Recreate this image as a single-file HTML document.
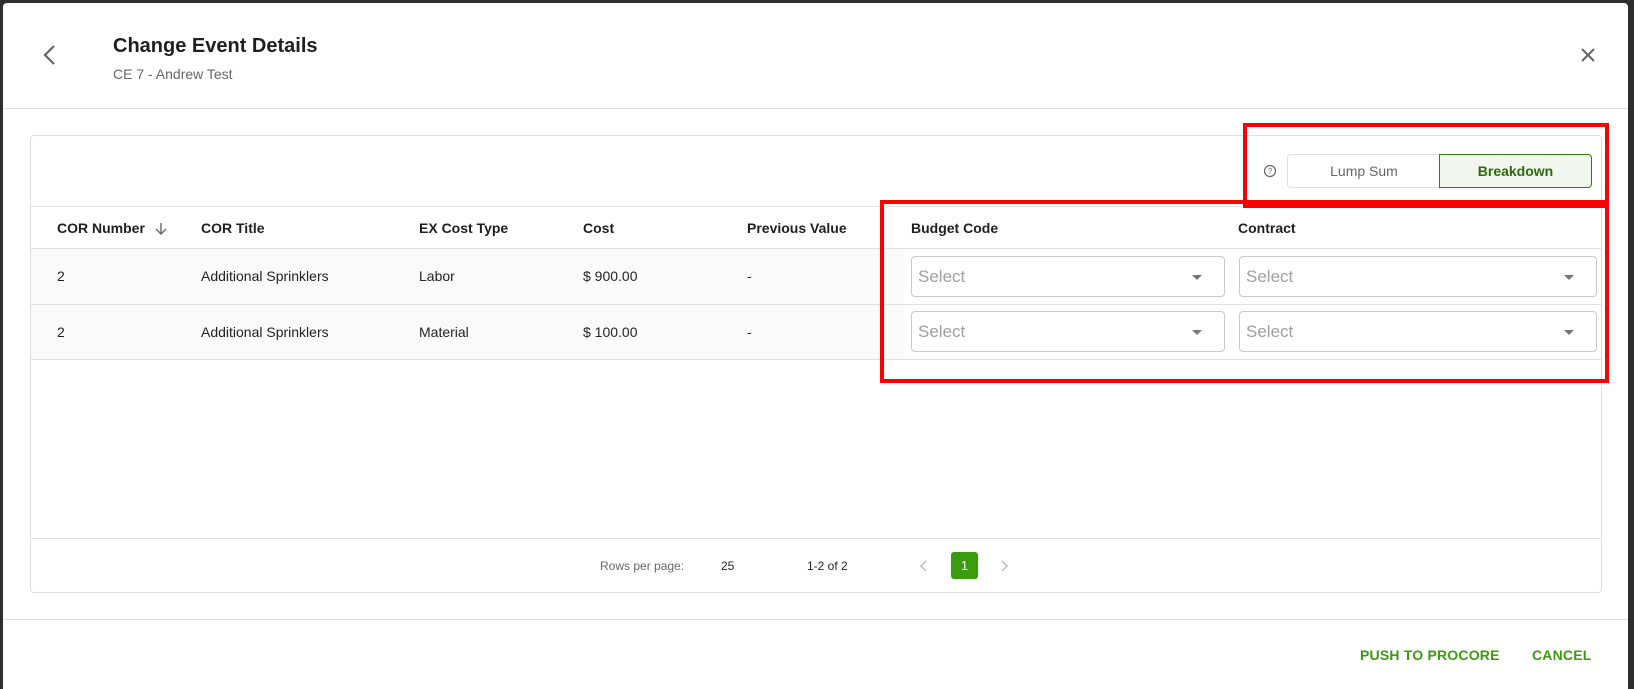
<!DOCTYPE html>
<html><head><meta charset="utf-8"><style>
*{margin:0;padding:0;box-sizing:border-box}
body{width:1634px;height:689px;background:#2e2e2e;font-family:"Liberation Sans",Arial,sans-serif;position:relative;overflow:hidden}
.a{position:absolute;white-space:nowrap}
.modal{position:absolute;left:3px;top:3px;width:1625px;height:686px;background:#fff;border-radius:4px 4px 0 0}
.h{font-size:14px;font-weight:bold;color:#1f1f1f}
.c{font-size:14px;color:#222}
.line{position:absolute;height:1px;background:#e0e0e0}
.sel{position:absolute;height:41px;border:1px solid #c8c8c8;border-radius:4px;background:#fff}
.sel span{position:absolute;left:6px;top:10px;font-size:17px;color:#a0a0a0}
.sel i{position:absolute;right:22px;top:18px;width:0;height:0;border-left:5px solid transparent;border-right:5px solid transparent;border-top:5px solid #757575}
.red{position:absolute;border:4px solid #ff0000}
.btn{font-size:14px;font-weight:bold;color:#3a9c0c;letter-spacing:0.2px}
</style></head><body>
<div class="modal"></div>
<svg class="a" style="left:40px;top:43px" width="20" height="24" viewBox="0 0 20 24"><path d="M14 3 L5 12 L14 21" fill="none" stroke="#666" stroke-width="2.2"/></svg>
<div class="a" style="left:113px;top:35px;font-size:20px;font-weight:bold;color:#1f1f1f">Change Event Details</div>
<div class="a" style="left:113px;top:66px;font-size:14px;color:#666">CE 7 - Andrew Test</div>
<svg class="a" style="left:1580px;top:47px" width="16" height="16" viewBox="0 0 16 16"><path d="M2 2 L14 14 M14 2 L2 14" stroke="#666" stroke-width="2"/></svg>
<div class="line" style="left:3px;top:108px;width:1625px"></div>
<div class="a" style="left:30px;top:135px;width:1572px;height:458px;border:1px solid #e0e0e0;border-radius:4px"></div>
<svg class="a" style="left:1263px;top:164px" width="14" height="14" viewBox="0 0 14 14"><circle cx="7" cy="7" r="5.5" fill="none" stroke="#666" stroke-width="1.2"/><text x="7" y="10" font-size="8" text-anchor="middle" fill="#666" font-family="Liberation Sans">?</text></svg>
<div class="a" style="left:1287px;top:154px;width:153px;height:34px;border:1px solid #e0e0e0;border-right:none;border-radius:4px 0 0 4px;font-size:14px;color:#666;text-align:center;line-height:32px">Lump Sum</div>
<div class="a" style="left:1439px;top:154px;width:153px;height:34px;border:1px solid #2e7d0e;border-radius:0 4px 4px 0;background:#f1f6ee;font-size:14px;font-weight:bold;color:#2b6a0a;text-align:center;line-height:32px">Breakdown</div>
<div class="line" style="left:31px;top:206px;width:1570px"></div>
<div class="a" style="left:31px;top:249px;width:873px;height:110px;background:#fafafa"></div>
<div class="line" style="left:31px;top:248px;width:1570px"></div>
<div class="line" style="left:31px;top:304px;width:1570px"></div>
<div class="line" style="left:31px;top:359px;width:1570px"></div>
<div class="a h" style="left:57px;top:220px">COR Number</div>
<svg class="a" style="left:154px;top:221px" width="14" height="16" viewBox="0 0 14 16"><path d="M7 2 V13 M2 8 L7 13 L12 8" fill="none" stroke="#666" stroke-width="1.4"/></svg>
<div class="a h" style="left:201px;top:220px">COR Title</div>
<div class="a h" style="left:419px;top:220px">EX Cost Type</div>
<div class="a h" style="left:583px;top:220px">Cost</div>
<div class="a h" style="left:747px;top:220px">Previous Value</div>
<div class="a h" style="left:911px;top:220px">Budget Code</div>
<div class="a h" style="left:1238px;top:220px">Contract</div>
<div class="a c" style="left:57px;top:268px">2</div>
<div class="a c" style="left:201px;top:268px">Additional Sprinklers</div>
<div class="a c" style="left:419px;top:268px">Labor</div>
<div class="a c" style="left:583px;top:268px">$ 900.00</div>
<div class="a c" style="left:747px;top:268px">-</div>
<div class="a c" style="left:57px;top:324px">2</div>
<div class="a c" style="left:201px;top:324px">Additional Sprinklers</div>
<div class="a c" style="left:419px;top:324px">Material</div>
<div class="a c" style="left:583px;top:324px">$ 100.00</div>
<div class="a c" style="left:747px;top:324px">-</div>
<div class="sel" style="left:911px;top:256px;width:314px"><span>Select</span><i></i></div>
<div class="sel" style="left:1239px;top:256px;width:358px"><span>Select</span><i></i></div>
<div class="sel" style="left:911px;top:311px;width:314px"><span>Select</span><i></i></div>
<div class="sel" style="left:1239px;top:311px;width:358px"><span>Select</span><i></i></div>
<div class="line" style="left:31px;top:538px;width:1570px"></div>
<div class="a" style="left:600px;top:559px;font-size:12px;color:#666">Rows per page:</div>
<div class="a" style="left:721px;top:559px;font-size:12px;color:#222">25</div>
<div class="a" style="left:807px;top:559px;font-size:12px;color:#222">1-2 of 2</div>
<svg class="a" style="left:918px;top:558px" width="12" height="16" viewBox="0 0 12 16"><path d="M8 3 L3 8 L8 13" fill="none" stroke="#bbb" stroke-width="1.5"/></svg>
<div class="a" style="left:951px;top:552px;width:27px;height:27px;background:#3a9c0c;border-radius:3px;color:#fff;font-size:13px;text-align:center;line-height:27px">1</div>
<svg class="a" style="left:998px;top:558px" width="12" height="16" viewBox="0 0 12 16"><path d="M4 3 L9 8 L4 13" fill="none" stroke="#bbb" stroke-width="1.5"/></svg>
<div class="line" style="left:3px;top:619px;width:1625px"></div>
<div class="a btn" style="left:1360px;top:647px">PUSH TO PROCORE</div>
<div class="a btn" style="left:1532px;top:647px">CANCEL</div>
<div class="red" style="left:1243px;top:123px;width:366px;height:85px"></div>
<div class="red" style="left:880px;top:200px;width:729px;height:183px"></div>
</body></html>
